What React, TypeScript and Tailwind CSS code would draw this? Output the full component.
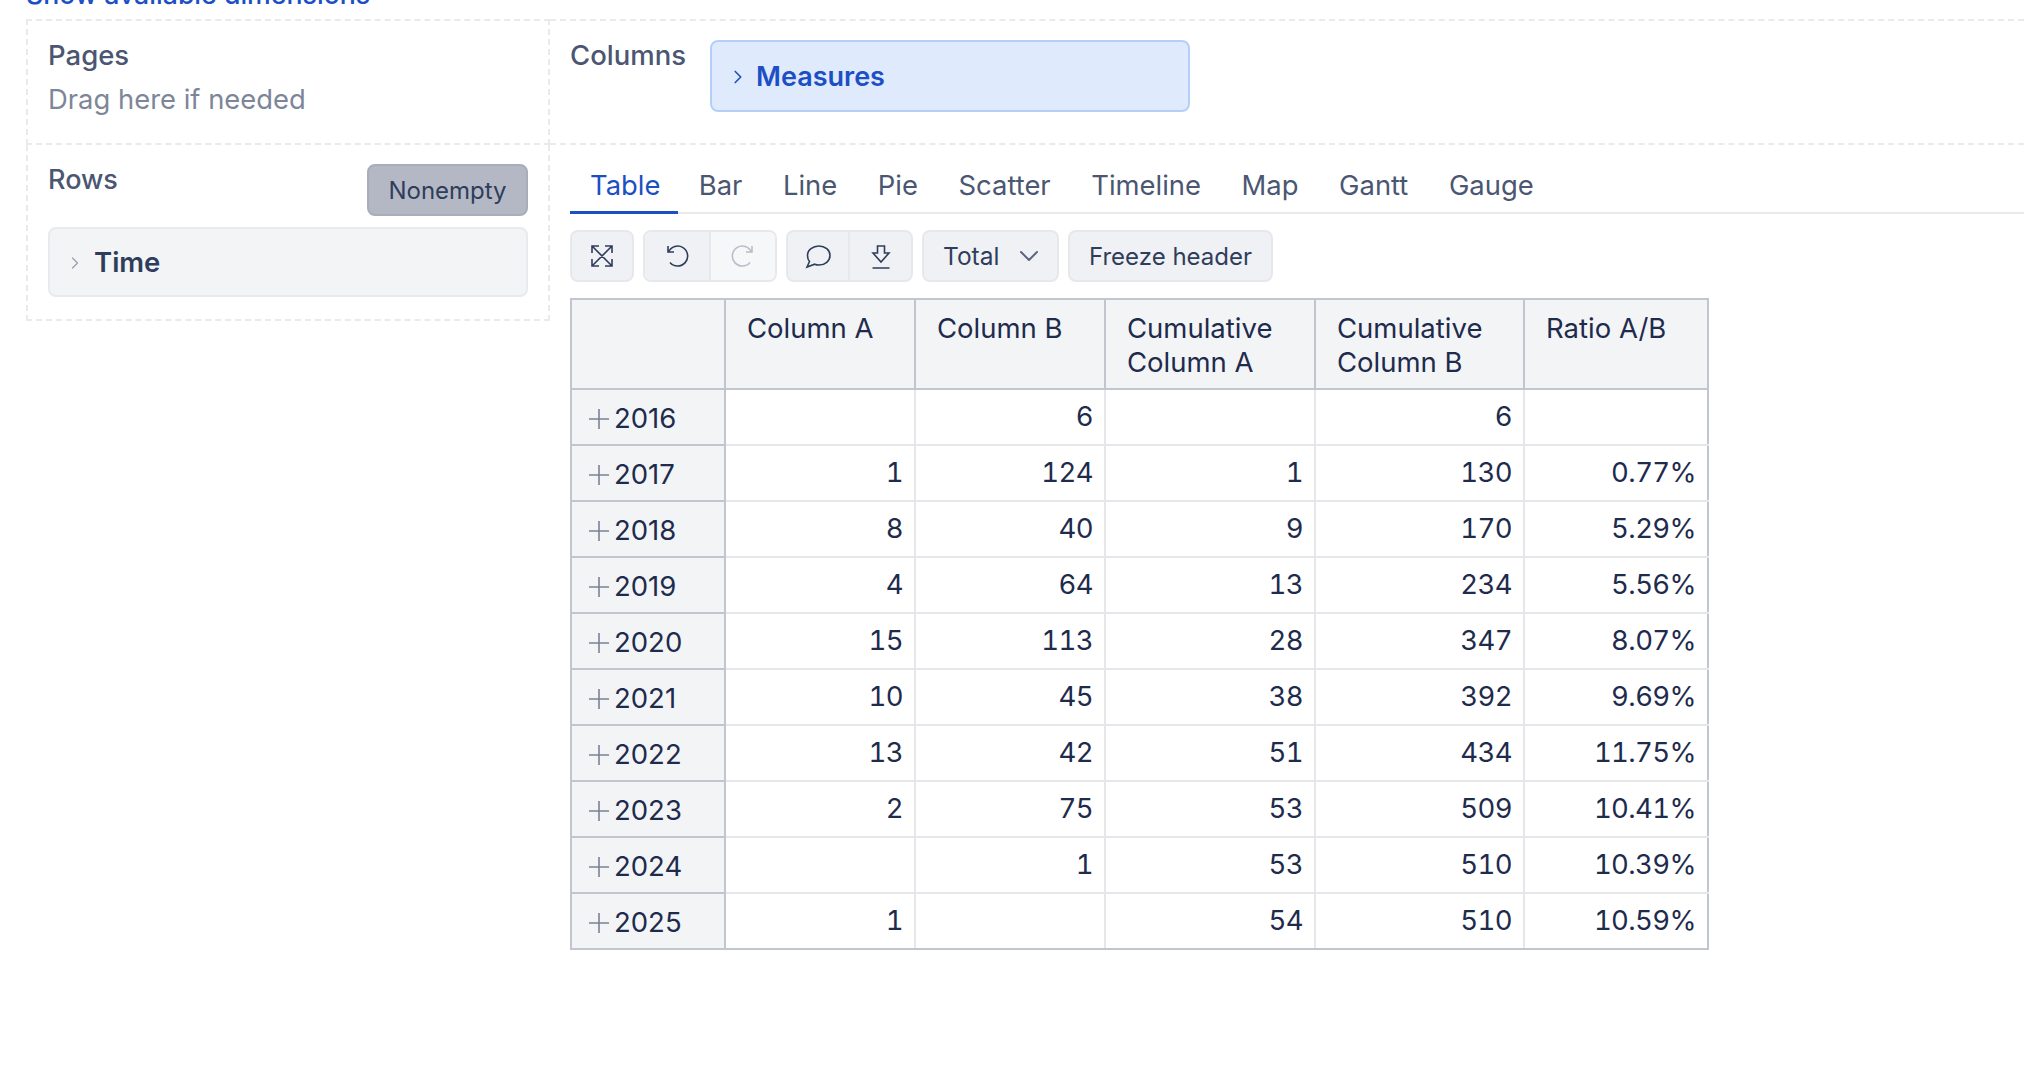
import { ChevronDown, ChevronRight } from "lucide-react";

const rows = [
  ["2016", "", "6", "", "6", ""],
  ["2017", "1", "124", "1", "130", "0.77%"],
  ["2018", "8", "40", "9", "170", "5.29%"],
  ["2019", "4", "64", "13", "234", "5.56%"],
  ["2020", "15", "113", "28", "347", "8.07%"],
  ["2021", "10", "45", "38", "392", "9.69%"],
  ["2022", "13", "42", "51", "434", "11.75%"],
  ["2023", "2", "75", "53", "509", "10.41%"],
  ["2024", "", "1", "53", "510", "10.39%"],
  ["2025", "1", "", "54", "510", "10.59%"],
];

const headers = ["Column A", "Column B", "Cumulative Column A", "Cumulative Column B", "Ratio A/B"];
const tabs = ["Table", "Bar", "Line", "Pie", "Scatter", "Timeline", "Map", "Gantt", "Gauge"];

function ExpandIcon() {
  return (
    <svg width="24" height="24" viewBox="0 0 24 24" fill="none" stroke="currentColor" strokeWidth="1.6">
      <path d="M2 9V2h7M15 2h7v7M22 15v7h-7M9 22H2v-7M2 2l20 20M22 2L2 22" />
    </svg>
  );
}

function UndoIcon({ flip }: { flip?: boolean }) {
  return (
    <svg width="26" height="26" viewBox="0 0 26 26" fill="none" stroke="currentColor" strokeWidth="1.6" className={flip ? "-scale-x-100" : ""}>
      <path d="M4 3v6h6M4.500 9A10 10 0 1 1 6 19.500" />
    </svg>
  );
}

function CommentIcon() {
  return (
    <svg width="26" height="26" viewBox="0 0 26 26" fill="none" stroke="currentColor" strokeWidth="1.6">
      <path d="M14 3c6 0 11 4 11 9.500S20 22 14 22c-1.500 0-3-.3-4.300-.8L2 24l2.500-5.500C3 16.800 2.500 14.800 2.500 12.500 2.500 7 8 3 14 3z" />
    </svg>
  );
}

function DownloadIcon() {
  return (
    <svg width="24" height="26" viewBox="0 0 24 26" fill="none" stroke="currentColor" strokeWidth="1.6">
      <path d="M8.500 2h7v7h4.500L12 18 4 9h4.500zM3.500 24h17" />
    </svg>
  );
}

function PlusIcon() {
  return (
    <svg width="20" height="20" viewBox="0 0 20 20" fill="none" stroke="#7b8294" strokeWidth="1.6" className="shrink-0">
      <path d="M10 0v20M0 10h20" />
    </svg>
  );
}

export default function App() {
  return (
    <div className="h-[1068px] overflow-hidden bg-white font-['Inter',sans-serif]">
      <a className="-mt-[26px] mb-[5px] ml-[26px] block text-[26.7px] leading-[40px] font-medium text-[#1d4fc4]">Show available dimensions</a>

      <div className="ml-[26px] grid grid-cols-[524px_1fr]">
        {/* Pages */}
        <div className="h-[126px] border-2 border-dashed border-[#e9eaee] pt-3 pl-5">
          <div className="text-[27.5px] leading-[44px] font-medium text-[#4a5672]">Pages</div>
          <div className="text-[27.4px] leading-[44px] text-[#7d8699]">Drag here if needed</div>
        </div>

        {/* Columns */}
        <div className="flex h-[126px] border-y-2 border-dashed border-[#e9eaee] pt-[19px] pl-5">
          <div className="w-[140px] pt-[1px] text-[27.5px] leading-[28px] font-medium text-[#4a5672]">Columns</div>
          <div className="flex h-[72px] w-[480px] items-center rounded-lg border-2 border-[#b5d0f8] bg-[#dfeafc] pt-[2px] pl-[15px] text-[#1d4fc4]">
            <ChevronRight size={22} strokeWidth={1.8} />
            <span className="ml-[7px] text-[27px] font-semibold">Measures</span>
          </div>
        </div>

        {/* Rows */}
        <div className="h-[176px] border-x-2 border-b-2 border-dashed border-[#e9eaee] px-5 pt-[19px]">
          <div className="flex items-start justify-between">
            <div className="text-[27px] leading-[32px] font-medium text-[#4a5672]">Rows</div>
            <button className="h-[52px] w-[161px] rounded-lg border-2 border-[#a8adba] bg-[#b4b8c4] pt-[2px] text-[24px] text-[#2f3d5c]">Nonempty</button>
          </div>
          <div className="mt-[11px] flex h-[70px] items-center rounded-lg border-2 border-[#e9eaee] bg-[#f3f4f6] pt-[2px] pl-[15px] text-[#2f3d5c]">
            <ChevronRight size={20} strokeWidth={1.6} className="text-[#9ba1af]" />
            <span className="ml-[9px] text-[27.5px] font-semibold">Time</span>
          </div>
        </div>

        {/* Report */}
        <div className="pl-5">
          <div className="flex h-[69px] items-end border-b-2 border-[#e9eaee]">
            {tabs.map((t, i) => (
              <div
                key={t}
                className={
                  i === 0
                    ? "-mb-[2px] border-b-[3px] border-[#1d4fc4] pr-[18px] pb-[4px] pl-5 text-[27.4px] leading-[44px] text-[#1d4fc4]"
                    : "px-[20.3px] pb-[5px] text-[27.4px] leading-[44px] text-[#4a5672]"
                }
              >
                {t}
              </div>
            ))}
          </div>

          <div className="mt-4 flex gap-[9px] text-[#2f3d5c]">
            <div className="flex h-[52px] w-[64px] items-center justify-center rounded-lg border-2 border-[#e7e8ec] bg-[#f0f1f4]">
              <ExpandIcon />
            </div>
            <div className="flex h-[52px] w-[134px] overflow-hidden rounded-lg border-2 border-[#e7e8ec]">
              <div className="flex flex-1 items-center justify-center border-r-2 border-[#e7e8ec] bg-[#f0f1f4]">
                <UndoIcon />
              </div>
              <div className="flex flex-1 items-center justify-center bg-[#f6f7f9] text-[#b9bdc8]">
                <UndoIcon flip />
              </div>
            </div>
            <div className="flex h-[52px] w-[127px] overflow-hidden rounded-lg border-2 border-[#e7e8ec] bg-[#f0f1f4]">
              <div className="flex flex-1 items-center justify-center border-r-2 border-[#e7e8ec]">
                <CommentIcon />
              </div>
              <div className="flex flex-1 items-center justify-center pt-[2px] pl-[2px]">
                <DownloadIcon />
              </div>
            </div>
            <div className="flex h-[52px] w-[137px] items-center justify-between rounded-lg border-2 border-[#e7e8ec] bg-[#f0f1f4] pr-[12px] pl-[19px] text-[24.5px]">
              <span className="pt-[1px]">Total</span>
              <ChevronDown size={32} strokeWidth={1.5} className="text-[#5b6680]" />
            </div>
            <div className="flex h-[52px] w-[205px] items-center justify-center rounded-lg border-2 border-[#e7e8ec] bg-[#f0f1f4] pt-[2px] text-[24px]">
              Freeze header
            </div>
          </div>

          <table className="mt-4 w-[1137px] table-fixed border-collapse text-[27.5px] text-[#1e2b4d]">
            <colgroup>
              <col className="w-[154px]" />
              <col className="w-[190px]" />
              <col className="w-[190px]" />
              <col className="w-[210px]" />
              <col className="w-[209px]" />
              <col className="w-[184px]" />
            </colgroup>
            <thead>
              <tr className="h-[90px]">
                <th className="border-2 border-[#c0c5d0] bg-[#f3f4f6]" />
                {headers.map((h) => (
                  <th key={h} className="border-2 border-[#c0c5d0] bg-[#f3f4f6] px-[21px] pt-[11px] pb-[7px] text-left align-top leading-[34px] font-normal">
                    {h}
                  </th>
                ))}
              </tr>
            </thead>
            <tbody>
              {rows.map((r) => (
                <tr key={r[0]} className="h-[56px]">
                  <td className="border-2 border-[#c0c5d0] bg-[#f3f4f6] pl-[17px]">
                    <div className="flex items-center gap-[5px] pt-[3px]">
                      <PlusIcon />
                      {r[0]}
                    </div>
                  </td>
                  {r.slice(1).map((v, i) => (
                    <td key={i} className="border-2 border-x-[#e5e7eb] border-y-[#e5e7eb] pr-[11px] text-right tracking-[-0.6px] tabular-nums last:border-r-[#c0c5d0] [tr:last-child_&]:border-b-[#c0c5d0]">
                      {v}
                    </td>
                  ))}
                </tr>
              ))}
            </tbody>
          </table>
        </div>
      </div>
    </div>
  );
}
